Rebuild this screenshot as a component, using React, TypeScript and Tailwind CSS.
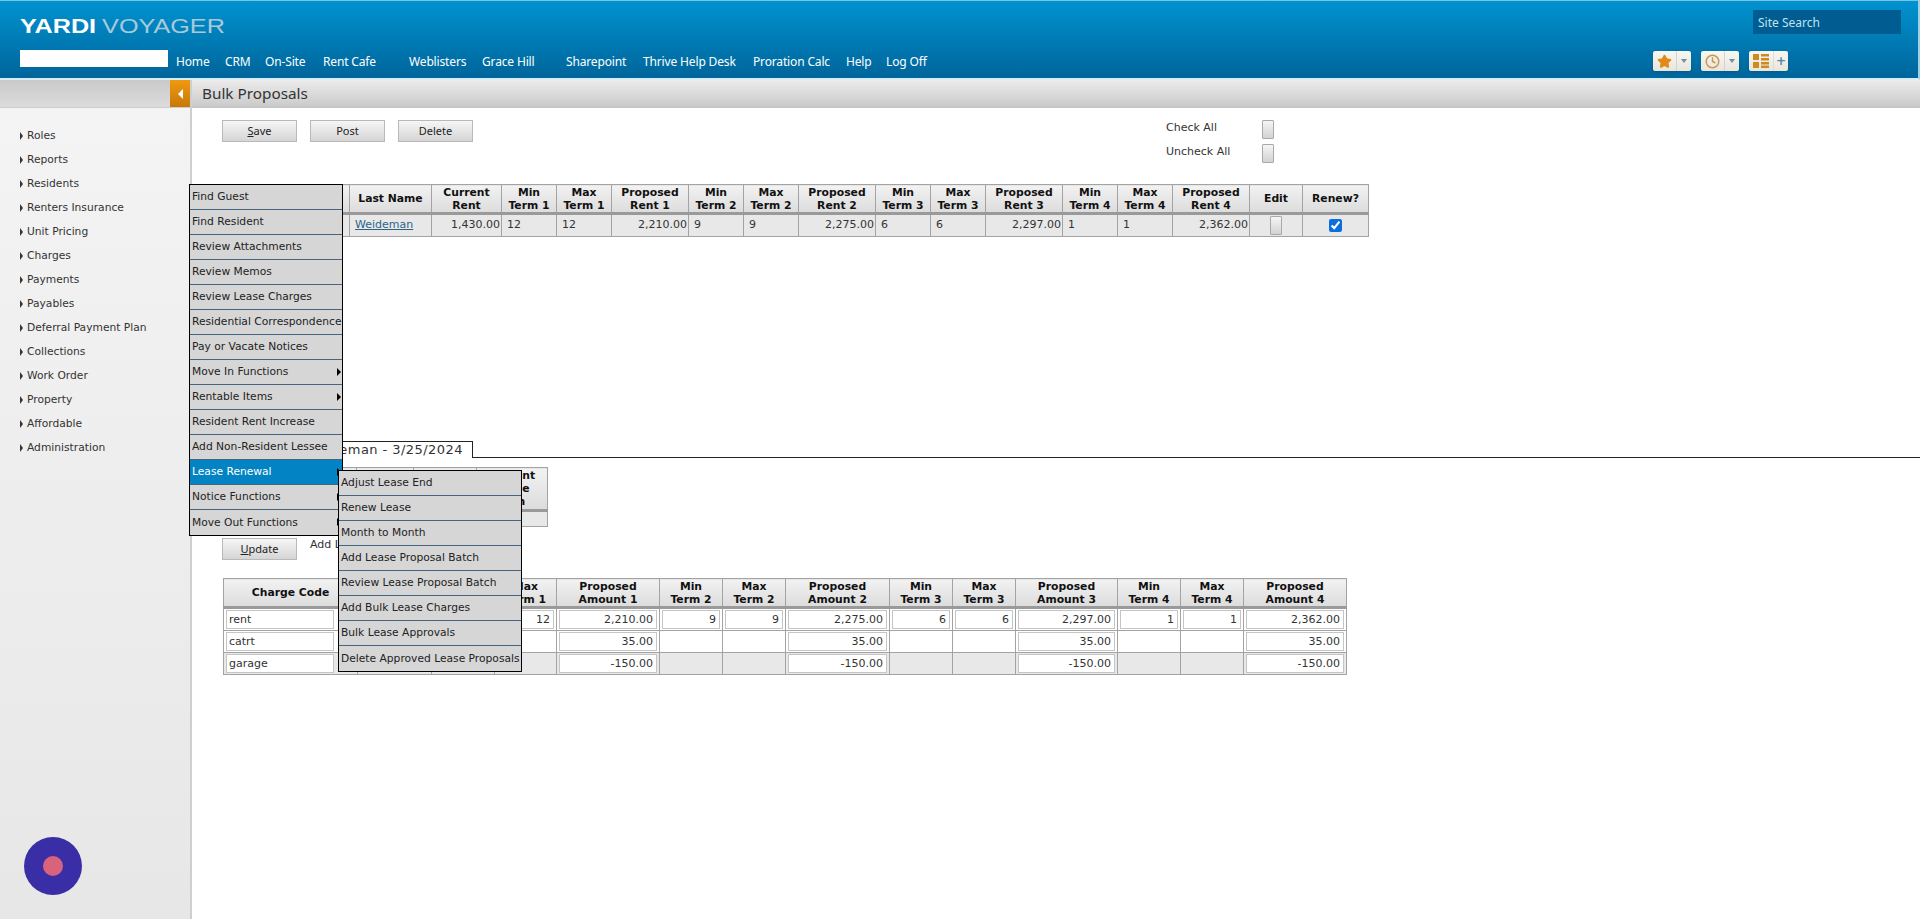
import React from 'react';
import { Star, Clock } from 'lucide-react';

const navItems = [
  { label: 'Home', w: 'w-[49px]' },
  { label: 'CRM', w: 'w-[40px]' },
  { label: 'On-Site', w: 'w-[58px]' },
  { label: 'Rent Cafe', w: 'w-[86px]' },
  { label: 'Weblisters', w: 'w-[73px]' },
  { label: 'Grace Hill', w: 'w-[84px]' },
  { label: 'Sharepoint', w: 'w-[77px]' },
  { label: 'Thrive Help Desk', w: 'w-[110px]' },
  { label: 'Proration Calc', w: 'w-[93px]' },
  { label: 'Help', w: 'w-[40px]' },
  { label: 'Log Off', w: 'w-[50px]' },
];

const sideItems = ['Roles', 'Reports', 'Residents', 'Renters Insurance', 'Unit Pricing', 'Charges', 'Payments', 'Payables', 'Deferral Payment Plan', 'Collections', 'Work Order', 'Property', 'Affordable', 'Administration'];

const mainMenu = [
  { label: 'Find Guest' }, { label: 'Find Resident' }, { label: 'Review Attachments' }, { label: 'Review Memos' },
  { label: 'Review Lease Charges' }, { label: 'Residential Correspondence' }, { label: 'Pay or Vacate Notices' },
  { label: 'Move In Functions', sub: true }, { label: 'Rentable Items', sub: true }, { label: 'Resident Rent Increase' },
  { label: 'Add Non-Resident Lessee' }, { label: 'Lease Renewal', sub: true, active: true }, { label: 'Notice Functions', sub: true },
  { label: 'Move Out Functions', sub: true },
];

const subMenu = ['Adjust Lease End', 'Renew Lease', 'Month to Month', 'Add Lease Proposal Batch', 'Review Lease Proposal Batch', 'Add Bulk Lease Charges', 'Bulk Lease Approvals', 'Delete Approved Lease Proposals'];

const topCols = [127, 82, 70, 55, 55, 77, 55, 55, 77, 55, 55, 77, 55, 55, 77, 53, 66];
const topHead = ['Unit', 'Last Name', 'Current\nRent', 'Min\nTerm 1', 'Max\nTerm 1', 'Proposed\nRent 1', 'Min\nTerm 2', 'Max\nTerm 2', 'Proposed\nRent 2', 'Min\nTerm 3', 'Max\nTerm 3', 'Proposed\nRent 3', 'Min\nTerm 4', 'Max\nTerm 4', 'Proposed\nRent 4', 'Edit', 'Renew?'];
const topRow = ['', 'Weideman', '1,430.00', '12', '12', '2,210.00', '9', '9', '2,275.00', '6', '6', '2,297.00', '1', '1', '2,362.00'];

const chargeCols = [134, 74, 63, 62, 103, 63, 63, 104, 63, 63, 102, 63, 63, 103];
const chargeHead = ['Charge Code', 'Description', 'Min\nTerm 1', 'Max\nTerm 1', 'Proposed\nAmount 1', 'Min\nTerm 2', 'Max\nTerm 2', 'Proposed\nAmount 2', 'Min\nTerm 3', 'Max\nTerm 3', 'Proposed\nAmount 3', 'Min\nTerm 4', 'Max\nTerm 4', 'Proposed\nAmount 4'];
const chargeRows = [
  { code: 'rent', terms: ['12', '12', '9', '9', '6', '6', '1', '1'], amts: ['2,210.00', '2,275.00', '2,297.00', '2,362.00'], cls: 'h-[23px] bg-white' },
  { code: 'catrt', terms: null, amts: ['35.00', '35.00', '35.00', '35.00'], cls: 'h-[22px] bg-white' },
  { code: 'garage', terms: null, amts: ['-150.00', '-150.00', '-150.00', '-150.00'], cls: 'h-[22px] bg-[#e8e8e8]' },
];

const thCls = 'whitespace-pre-line border border-[#a3a3a3] border-b-[3px] border-b-[#9a9a9a] bg-gradient-to-b from-[#f2f2f2] to-[#dcdcdc] px-0 py-0 text-center font-bold text-[10.8px] leading-[13px] text-[#111]';

const GrayButton = ({ children, w }: { children: React.ReactNode; w: string }) => (
  <button className={`${w} h-[22px] border border-[#b9b9b9] bg-gradient-to-b from-[#f6f6f6] to-[#d5d5d5] font-['Noto_Sans',sans-serif] text-[11px] text-[#222]`}>{children}</button>
);

const MiniButton = () => <div className="h-[19px] w-[12px] rounded-[1px] border border-[#a9a9a9] bg-gradient-to-b from-[#f6f6f6] to-[#d2d2d2]" />;

const Cell = ({ value }: { value: string }) => (
  <div className="mx-[2px] h-[19px] border border-[#c5c5c5] bg-white px-[3px] text-right text-[11px] leading-[18px] text-[#333]">{value}</div>
);

const Caret = () => <div className="h-0 w-0 border-x-[3px] border-t-[4px] border-x-transparent border-t-[#6d8fa6]" />;

export default function App() {
  return (
    <div className="relative h-[919px] w-[1920px] overflow-hidden bg-white font-['DejaVu_Sans',sans-serif] text-[#222]">
      {/* top bar */}
      <header className="h-[80px] border-t border-r-2 border-b-2 border-t-[#7fc1e0] border-r-[#9fd0e6] border-b-[#d8eef6] bg-gradient-to-b from-[#0093d0] to-[#00659b] pl-[20px] pr-[17px]">
        <div className="flex h-[49px] items-start justify-between">
          <div className="mt-[14px] flex origin-left scale-x-[1.2] items-center font-['Liberation_Sans',sans-serif] text-[21px] leading-[22px]">
            <span className="font-bold text-white">YARDI</span>
            <span className="ml-[5px] text-[#a9c9da]">VOYAGER</span>
          </div>
          <div className="mt-[9px] flex h-[24px] w-[148px] items-center bg-[#005c91] pl-[5px] pt-[1px] font-['Noto_Sans',sans-serif] text-[12px] text-[#bfe3f3]">Site Search</div>
        </div>
        <div className="flex h-[24px] items-start">
          <div className="h-[17px] w-[148px] bg-white" />
          <nav className="ml-[8px] mt-[1px] flex h-[22px] items-center font-['Noto_Sans',sans-serif] text-[12px] tracking-[-0.15px] text-white">
            {navItems.map((n) => <span key={n.label} className={`${n.w} whitespace-nowrap`}>{n.label}</span>)}
          </nav>
          <div className="ml-auto mr-[113px] mt-[1px] flex gap-[10px]">
            <div className="flex h-[20px] w-[38px] rounded-[2px] bg-gradient-to-b from-[#f8f7f3] to-[#e9e5da] shadow-sm">
              <div className="flex w-[24px] items-center justify-center border-r border-r-[#cfd3d3]"><Star size={15} className="fill-[#e08a1a] text-[#e08a1a]" /></div>
              <div className="flex flex-1 items-center justify-center"><Caret /></div>
            </div>
            <div className="flex h-[20px] w-[38px] rounded-[2px] bg-gradient-to-b from-[#f8f7f3] to-[#e9e5da] shadow-sm">
              <div className="flex w-[24px] items-center justify-center border-r border-r-[#cfd3d3]"><Clock size={15} strokeWidth={2.5} className="text-[#c99a55]" /></div>
              <div className="flex flex-1 items-center justify-center"><Caret /></div>
            </div>
            <div className="flex h-[20px] w-[39px] rounded-[2px] bg-gradient-to-b from-[#f8f7f3] to-[#e9e5da] shadow-sm">
              <div className="flex w-[25px] items-center justify-center border-r border-r-[#dcdcdc]">
                <svg width="16" height="15" viewBox="0 0 16 15" fill="#d08a1e"><rect x="0" y="0" width="6" height="6" /><rect x="0" y="8" width="6" height="6" /><rect x="8" y="0" width="8" height="2.5" /><rect x="8" y="4" width="8" height="2.5" /><rect x="8" y="8" width="8" height="2.5" /><rect x="8" y="11.5" width="8" height="2.5" /></svg>
              </div>
              <div className="flex flex-1 items-center justify-center text-[12px] font-bold leading-none text-[#4f86ac]">+</div>
            </div>
          </div>
        </div>
      </header>

      <div className="flex h-[839px]">
        {/* sidebar */}
        <aside className="h-full w-[192px] shrink-0 border-r-2 border-r-[#cfcfcf] bg-gradient-to-b from-[#f4f4f4] to-[#e7e7e7]">
          <div className="flex h-[28px] justify-end border-b border-b-[#cdcdcd] bg-gradient-to-b from-[#c9c9c9] to-[#dcdcdc]">
            <div className="flex h-[27px] w-[20px] items-center justify-center bg-gradient-to-b from-[#f09a10] to-[#c87808]">
              <div className="h-0 w-0 border-y-[5px] border-r-[5px] border-y-transparent border-r-white" />
            </div>
          </div>
          <ul className="mt-[16px] pl-[20px] text-[10.7px] text-[#333]">
            {sideItems.map((s) => (
              <li key={s} className="flex h-[24px] items-center whitespace-nowrap">
                <span className="mr-[4px] h-0 w-0 border-y-[4px] border-l-[3px] border-y-transparent border-l-[#333]" />
                {s}
              </li>
            ))}
          </ul>
        </aside>

        {/* main */}
        <main className="min-w-0 flex-1">
          <div className="flex h-[28px] items-center border-b-2 border-b-[#c6c6c6] bg-gradient-to-b from-[#ececec] to-[#cbcbcb] pl-[10px] font-['Noto_Sans',sans-serif] text-[15.3px] text-[#333]">Bulk Proposals</div>

          <div className="flex pl-[30px] pt-[12px]">
            <div className="flex gap-[13px]">
              <GrayButton w="w-[75px]"><u>S</u>ave</GrayButton>
              <GrayButton w="w-[75px]">Post</GrayButton>
              <GrayButton w="w-[75px]">Delete</GrayButton>
            </div>
            <div className="ml-[693px] flex flex-col gap-[5px] text-[11px] text-[#333]">
              <div className="flex h-[19px] items-start"><span className="w-[96px] leading-[15px]">Check All</span><MiniButton /></div>
              <div className="flex h-[19px] items-start"><span className="w-[96px] leading-[15px]">Uncheck All</span><MiniButton /></div>
            </div>
          </div>

          {/* proposals */}
          <table className="ml-[30px] mt-[21px] table-fixed border-collapse text-[11px]" style={{ width: topCols.reduce((a, b) => a + b, 0) }}>
            <colgroup>{topCols.map((w, i) => <col key={i} style={{ width: w }} />)}</colgroup>
            <thead>
              <tr className="h-[29px]">{topHead.map((h) => <th key={h} className={thCls}>{h}</th>)}</tr>
            </thead>
            <tbody>
              <tr className="h-[23px] bg-[#e8e8e8] text-[#333]">
                {topRow.map((v, i) => (
                  <td key={i} className={`border border-[#a3a3a3] px-[5px] ${v.includes(',') ? 'pr-[1px] text-right' : 'text-left'}`}>
                    {v === 'Weideman' ? <a className="text-[#2c6488] underline">{v}</a> : v}
                  </td>
                ))}
                <td className="border border-[#a3a3a3]"><div className="flex justify-center"><MiniButton /></div></td>
                <td className="border border-[#a3a3a3] text-center"><input type="checkbox" defaultChecked className="h-[13px] w-[13px] align-middle accent-[#0b6fe0]" /></td>
              </tr>
            </tbody>
          </table>

          {/* tab */}
          <div className="mt-[204px] flex h-[17px] border-b border-b-[#222] pl-[31px]">
            <div className="h-[17px] w-[250px] border border-b-0 border-[#222] bg-white pr-[9px] text-right text-[13px] leading-[16px] tracking-[0.45px] text-[#333]">Weideman - 3/25/2024</div>
          </div>

          {/* lease table */}
          <table className="ml-[30px] mt-[9px] table-fixed border-collapse text-[11px]" style={{ width: 325 }}>
            <colgroup><col style={{ width: 134 }} /><col style={{ width: 57 }} /><col style={{ width: 63 }} /><col style={{ width: 71 }} /></colgroup>
            <thead>
              <tr className="h-[43px]"><th className={thCls}>Unit</th><th className={thCls}>From</th><th className={thCls}>To</th><th className={thCls}>{'Current\nLease\nPlan'}</th></tr>
            </thead>
            <tbody>
              <tr className="h-[16px] bg-[#e8e8e8]"><td className="border border-[#a3a3a3]" /><td className="border border-[#a3a3a3]" /><td className="border border-[#a3a3a3]" /><td className="border border-[#a3a3a3]" /></tr>
            </tbody>
          </table>

          <div className="ml-[30px] mt-[11px] flex items-start">
            <GrayButton w="w-[75px]"><u>U</u>pdate</GrayButton>
            <span className="ml-[13px] text-[11px] leading-[14px] text-[#333]">Add Lease Charge</span>
          </div>

          {/* charges */}
          <table className="ml-[31px] mt-[18px] table-fixed border-collapse text-[11px]" style={{ width: chargeCols.reduce((a, b) => a + b, 0) }}>
            <colgroup>{chargeCols.map((w, i) => <col key={i} style={{ width: w }} />)}</colgroup>
            <thead>
              <tr className="h-[29px]">{chargeHead.map((h) => <th key={h} className={thCls}>{h}</th>)}</tr>
            </thead>
            <tbody>
              {chargeRows.map((r) => (
                <tr key={r.code} className={r.cls}>
                  <td className="border border-[#a3a3a3]"><div className="mx-[2px] h-[19px] w-[108px] border border-[#c5c5c5] bg-white px-[2px] text-[11px] leading-[18px] text-[#333]">{r.code}</div></td>
                  <td className="border border-[#a3a3a3]" />
                  {[0, 1, 2, 3].map((g) => (
                    <React.Fragment key={g}>
                      <td className="border border-[#a3a3a3]">{r.terms && <Cell value={r.terms[g * 2]} />}</td>
                      <td className="border border-[#a3a3a3]">{r.terms && <Cell value={r.terms[g * 2 + 1]} />}</td>
                      <td className="border border-[#a3a3a3]"><Cell value={r.amts[g]} /></td>
                    </React.Fragment>
                  ))}
                </tr>
              ))}
            </tbody>
          </table>
        </main>
      </div>

      {/* flyout menus */}
      <div className="absolute left-[189px] top-[184px] w-[154px] border border-black bg-[#d6d6d6] text-[10.7px] text-[#222]">
        {mainMenu.map((m) => (
          <div key={m.label} className={`relative flex h-[25px] items-center whitespace-nowrap border-b border-b-[#47657f] pl-[2px] pt-[1px] last:border-b-0 ${m.active ? 'bg-[#0283c3] text-white' : ''}`}>
            {m.label}
            {m.sub && <span className="absolute right-[1px] top-[8px] h-0 w-0 border-y-[4px] border-l-[4px] border-y-transparent border-l-black" />}
          </div>
        ))}
      </div>
      <div className="absolute left-[338px] top-[470px] w-[184px] border border-black bg-[#d6d6d6] text-[10.7px] text-[#222]">
        {subMenu.map((m) => (
          <div key={m} className="flex h-[25px] items-center whitespace-nowrap border-b border-b-[#47657f] pl-[2px] pt-[1px] last:border-b-0">{m}</div>
        ))}
      </div>

      {/* chat bubble */}
      <div className="absolute left-[24px] top-[837px] flex h-[58px] w-[58px] items-center justify-center rounded-full bg-[#3a2ea6]">
        <div className="h-[20px] w-[20px] rounded-full bg-[#d9627c]" />
      </div>
    </div>
  );
}
